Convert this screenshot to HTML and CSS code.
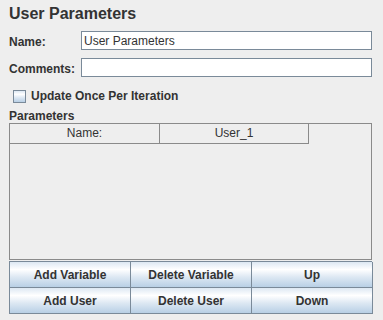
FILE: index.html
```html
<!doctype html>
<html>

<head>
  <title>User Parameters</title>
  <link rel="stylesheet" href="styles.css">
</head>

<body>
  <div class="panel">
    <h1 class="title">User Parameters</h1>

    <div class="field-row">
      <label class="field-label" for="name">Name:</label>
      <input class="text-field" id="name" type="text" value="User Parameters">
    </div>

    <div class="field-row">
      <label class="field-label" for="comments">Comments:</label>
      <input class="text-field" id="comments" type="text" value="">
    </div>

    <div class="check-row">
      <span class="check-box"></span>
      <span class="check-label">Update Once Per Iteration</span>
    </div>

    <div class="section-label">Parameters</div>

    <div class="table-box">
      <div class="table-head">
        <div class="head-cell name-col">Name:</div>
        <div class="head-cell user-col">User_1</div>
      </div>
    </div>

    <div class="button-grid">
      <button class="btn">Add Variable</button>
      <button class="btn">Delete Variable</button>
      <button class="btn">Up</button>
      <button class="btn">Add User</button>
      <button class="btn">Delete User</button>
      <button class="btn">Down</button>
    </div>
  </div>
</body>

</html>
```

FILE: styles.css
```css
html, body {
  margin: 0;
  background: #eeeeee;
}
body {
  font-family: "Liberation Sans", Arial, sans-serif;
  font-size: 12px;
  color: #333333;
}
.panel {
  width: 363px;
  padding: 4px 11px 0 9px;
}
.title {
  margin: 0;
  font-size: 16px;
  line-height: 20px;
  font-weight: bold;
}
.field-row {
  display: flex;
  align-items: center;
  height: 19px;
  margin-top: 7px;
}
.field-row + .field-row {
  margin-top: 8px;
}
.field-label {
  width: 72px;
  font-weight: bold;
  padding-top: 2px;
}
.text-field {
  flex: 1;
  box-sizing: border-box;
  height: 19px;
  margin: 0;
  padding: 0 2px;
  border: 1px solid #7a8a99;
  background: #ffffff;
  font-family: "Liberation Sans", Arial, sans-serif;
  font-size: 12px;
  color: #333333;
  outline: none;
}
.check-row {
  display: flex;
  align-items: center;
  height: 18px;
  margin-top: 10px;
  padding-left: 4px;
}
.check-box {
  width: 11px;
  height: 11px;
  border: 1px solid #7a8a99;
  background: linear-gradient(#dde8f3 0%, #ffffff 30%, #dde8f3 60%, #b8cfe5 100%);
  margin-right: 5px;
}
.check-label {
  font-weight: bold;
}
.section-label {
  font-weight: bold;
  line-height: 14px;
  margin-top: 4px;
}
.table-box {
  box-sizing: border-box;
  height: 137px;
  border: 1px solid #8a8a8a;
  margin-top: 0;
}
.table-head {
  display: flex;
  height: 20px;
}
.head-cell {
  box-sizing: border-box;
  text-align: center;
  line-height: 19px;
  border-right: 1px solid #8a8a8a;
  border-bottom: 1px solid #8a8a8a;
  background: #eeeeee;
}
.name-col {
  width: 150px;
}
.user-col {
  width: 149px;
}
.button-grid {
  display: grid;
  grid-template-columns: 121px 121px 121px;
  grid-auto-rows: 26px;
  margin-top: 1px;
  border: 1px solid #7a8a99;
  border-right: none;
  border-bottom: none;
  width: 363px;
  box-sizing: border-box;
}
.btn {
  margin: 0;
  padding: 0;
  border: none;
  border-right: 1px solid #7a8a99;
  border-bottom: 1px solid #7a8a99;
  background: linear-gradient(#dde8f3 0%, #ffffff 30%, #dde8f3 60%, #b8cfe5 100%);
  font-family: "Liberation Sans", Arial, sans-serif;
  font-size: 12px;
  font-weight: bold;
  color: #333333;
}
```
